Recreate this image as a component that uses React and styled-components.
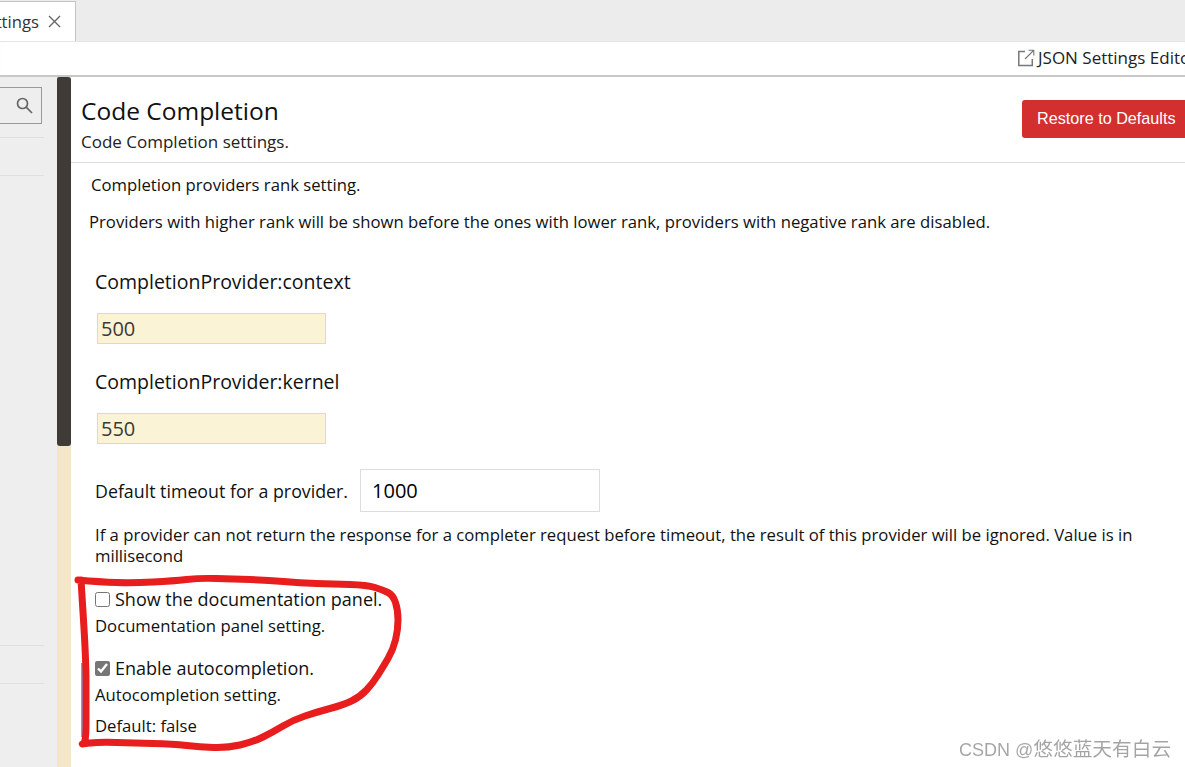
import React from "react";
import styled, { createGlobalStyle } from "styled-components";

const Global = createGlobalStyle`
  html, body { margin: 0; padding: 0; background: #fff; }
  body { font-family: "Open Sans", "Noto Sans", sans-serif; color: #000; }
  * { box-sizing: border-box; }
`;
const Page = styled.div`
  position: relative; width: 1185px; height: 767px; overflow: hidden;
  display: flex; flex-direction: column; background: #fff;
`;
const TabStrip = styled.div`
  height: 41px; flex: none; background: #ececec; padding-top: 1px; display: flex;
`;
const Tab = styled.div`
  width: 76px; height: 40px; background: #fff; display: flex; align-items: center; justify-content: flex-end;
  border-top: 1px solid #c4c4c4; border-right: 1px solid #c4c4c4; padding-right: 14px; gap: 9px;
  overflow: hidden; font-size: 16.7px; color: #333; white-space: nowrap; flex: none;
`;
const CloseIcon = styled.svg` width: 13px; height: 13px; flex: none; `;
const Toolbar = styled.div`
  height: 36px; flex: none; border-bottom: 2px solid #c8c8c8; display: flex; align-items: center;
  padding: 0 0 2px 1017px; gap: 3px; white-space: nowrap; font-size: 17px; color: #222; box-shadow: inset 0 1px 1px #e4e4e4;
`;
const ToolbarIcon = styled.svg` flex: none; margin-top: 2px; `;
const Main = styled.div` flex: 1; display: flex; min-height: 0; `;
const Sidebar = styled.div`
  width: 57px; flex: none; background: #eeeeee; padding-top: 10px; overflow: hidden;
`;
const SearchBox = styled.div`
  width: 42px; height: 37px; border: 1px solid #999; border-left: none; display: flex; align-items: center;
  justify-content: flex-end; padding-right: 8px; margin-bottom: 13px;
`;
const SideRows = styled.div` width: 44px; margin-top: ${p => p.$top || 0}px; `;
const SideRow = styled.div` height: 38px; border-top: 1px solid #e0e0e0; `;
const Track = styled.div` width: 14px; flex: none; background: #f3e6c9; `;
const Thumb = styled.div` height: 369px; background: #3f3b36; border-radius: 2px 3px 3px 3px; `;
const Content = styled.div` flex: 1; min-width: 0; display: flex; flex-direction: column; `;
const Header = styled.div`
  height: 86px; flex: none; border-bottom: 1px solid #dddddd; padding: 18px 0 0 10px;
  display: flex; justify-content: space-between; align-items: flex-start;
`;
const Title = styled.div` font-size: 24.5px; line-height: 32px; color: #111; `;
const Subtitle = styled.div` font-size: 17px; line-height: 24px; margin-top: 3px; color: #222; `;
const RestoreButton = styled.button`
  flex: none; width: 170px; height: 38px; margin: 5px -7px 0 0; border: none; border-radius: 3px; background: #d32f2f;
  color: #fff; font: 16.2px "Liberation Sans", Arial, sans-serif; text-align: left; padding: 0 0 2px 15px;
`;
const Body = styled.div` padding: 0 0 0 18px; `;
const Text = styled.p`
  margin: ${p => p.$top}px 0 0 ${p => p.$left || 0}px; line-height: ${p => p.$lh || 22}px; font-size: 16.7px; color: #111;
  white-space: ${p => p.$wrap ? "normal" : "nowrap"};
`;
const FieldLabel = styled.div` margin: ${p => p.$top}px 0 0 6px; font-size: 19.5px; line-height: 24px; color: #111; `;
const WarnInput = styled.div`
  width: 229px; height: 31px; margin: 19px 0 0 8px; background: #fbf3d5; border: 1px solid #e8d9b0;
  font-size: 20px; line-height: 29px; padding-left: 3px; color: #3b3a35;
`;
const TimeoutRow = styled.div` display: flex; align-items: center; margin: 25px 0 0 6px; gap: 12px; font-size: 17.8px; color: #111; white-space: nowrap; `;
const NumberBox = styled.div`
  width: 240px; height: 43px; border: 1px solid #dddddd; font-size: 20px; line-height: 41px; padding-left: 11px; color: #000;
`;
const CheckRow = styled.label`
  display: flex; align-items: center; gap: 5px; margin: ${p => p.$top}px 0 0 6px; font-size: 18px; line-height: 24px; color: #111; white-space: nowrap;
`;
const Check = styled.input`
  width: 15px; height: 15px; margin: 0; accent-color: #767676; flex: none;
`;
const ActiveSection = styled.div`
  position: relative; margin-top: 19px;
  &::before { content: ""; position: absolute; left: -8px; top: 7px; bottom: 0; width: 2px; background: #64a8ef; }
`;
const Annotation = styled.svg` position: absolute; left: 0; top: 0; pointer-events: none; `;
const Watermark = styled.div`
  position: absolute; left: 959px; top: 735px; font: 19.7px/26px "Noto Sans CJK SC", sans-serif;
  color: rgba(0,0,0,.36); filter: blur(0.4px); white-space: nowrap;
`;
const WatermarkLatin = styled.span` font: 18px/26px "Liberation Sans", sans-serif; `;
const pts = [[78,580],[100,582],[133,583],[173,581],[200,578],[233,579],[267,580],[300,583],[333,584],[367,585],[383,590],[393,595],[398,610],[398,630],[393,650],[383,667],[373,683],[360,697],[343,705],[317,712],[293,720],[273,732],[253,742],[227,748],[200,747],[173,744],[133,743],[100,742],[80,744],[86,744],[86,703],[86,660],[81,580]];
const smooth = pts.reduce((d, p, i) => {
  if (i === 0) return `M${p[0]} ${p[1]}`;
  const n = pts[i + 1];
  if (!n) return `${d} L${p[0]} ${p[1]}`;
  return `${d} Q${p[0]} ${p[1]} ${(p[0] + n[0]) / 2} ${(p[1] + n[1]) / 2}`;
}, "");

export default function App() {
  return (
    <Page>
      <Global />
      <TabStrip>
        <Tab>
          Settings
          <CloseIcon viewBox="0 0 13 13"><path d="M1 1l11 11M12 1L1 12" stroke="#666" strokeWidth="1.4" fill="none" /></CloseIcon>
        </Tab>
      </TabStrip>
      <Toolbar>
        <ToolbarIcon width="18" height="18" viewBox="0 0 18 18" fill="none" stroke="#777" strokeWidth="1.5">
          <path d="M8 2.5H1.8v14h13.5V10" />
          <path d="M8 10l8.5-8.5M11.5 1.2h5.3v5.3" strokeWidth="1.1" />
        </ToolbarIcon>
        JSON Settings Editor
      </Toolbar>
      <Main>
        <Sidebar>
          <SearchBox>
            <svg width="17" height="17" viewBox="0 0 17 17" fill="none" stroke="#666" strokeWidth="1.7">
              <circle cx="6.5" cy="6.5" r="5" /><path d="M10.2 10.2L16 16" />
            </svg>
          </SearchBox>
          <SideRows><SideRow /><SideRow /></SideRows>
          <SideRows $top={432}><SideRow /><SideRow /></SideRows>
        </Sidebar>
        <Track><Thumb /></Track>
        <Content>
          <Header>
            <div>
              <Title>Code Completion</Title>
              <Subtitle>Code Completion settings.</Subtitle>
            </div>
            <RestoreButton>Restore to Defaults</RestoreButton>
          </Header>
          <Body>
            <Text $top={11} $left={2}>Completion providers rank setting.</Text>
            <Text $top={15}>Providers with higher rank will be shown before the ones with lower rank, providers with negative rank are disabled.</Text>
            <FieldLabel $top={37}>CompletionProvider:context</FieldLabel>
            <WarnInput>500</WarnInput>
            <FieldLabel $top={26}>CompletionProvider:kernel</FieldLabel>
            <WarnInput>550</WarnInput>
            <TimeoutRow>Default timeout for a provider.<NumberBox>1000</NumberBox></TimeoutRow>
            <Text $top={12} $left={6} $lh={21} $wrap>If a provider can not return the response for a completer request before timeout, the result of this provider will be ignored. Value is in millisecond</Text>
            <CheckRow $top={21}><Check type="checkbox" readOnly />Show the documentation panel.</CheckRow>
            <Text $top={4} $left={6}>Documentation panel setting.</Text>
            <ActiveSection>
              <CheckRow $top={0}><Check type="checkbox" defaultChecked />Enable autocompletion.</CheckRow>
              <Text $top={4} $left={6}>Autocompletion setting.</Text>
              <Text $top={9} $left={6}>Default: false</Text>
            </ActiveSection>
          </Body>
        </Content>
      </Main>
      <Annotation width="1185" height="767" viewBox="0 0 1185 767">
        <path d={smooth} fill="none" stroke="#e81e1e" strokeWidth="7" strokeLinecap="round" strokeLinejoin="round" />
      </Annotation>
      <Watermark><WatermarkLatin>CSDN @</WatermarkLatin>悠悠蓝天有白云</Watermark>
    </Page>
  );
}
